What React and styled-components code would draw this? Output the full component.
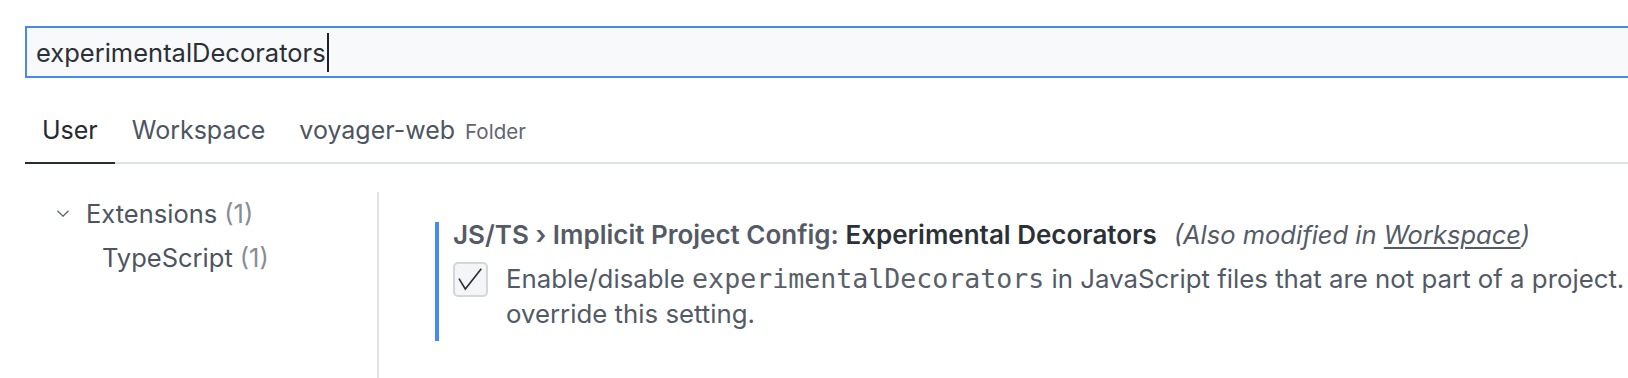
import React from "react";
import styled, { createGlobalStyle } from "styled-components";

const Global = createGlobalStyle`
  html, body {
    margin: 0;
    padding: 0;
    background: #ffffff;
    overflow: hidden;
  }
  body {
    font-family: Inter, "Noto Sans", "Liberation Sans", sans-serif;
    -webkit-font-smoothing: antialiased;
  }
`;

const Page = styled.div`
  width: 2310px;
  padding: 26px 0 0 25px;
  height: 352px;
  display: flex;
  flex-direction: column;
`;

const SearchBox = styled.div`
  box-sizing: border-box;
  height: 52px;
  border: 2px solid #4689f1;
  background: #f8f9fb;
  display: flex;
  align-items: center;
  padding-left: 9px;
`;

const SearchText = styled.span`
  font-size: 25.5px;
  color: #2b2f36;
`;

const Caret = styled.span`
  display: inline-block;
  width: 2px;
  height: 39px;
  background: #1f2124;
  margin-left: 1px;
`;

const TabBar = styled.div`
  margin-top: 32px;
  display: flex;
  box-shadow: inset 0 -2px 0 #dfe3e8;
`;

const Tab = styled.div`
  padding: 0 17px 12px;
  font-size: 25px;
  line-height: 40px;
  height: 40px;
  white-space: nowrap;
  color: ${(p) => (p.$active ? "#262a31" : "#4d5560")};
  border-bottom: 2px solid ${(p) => (p.$active ? "#2a2d33" : "transparent")};
`;

const TabHint = styled.span`
  font-size: 20.5px;
  line-height: 1;
  margin-left: 10px;
  color: #5f6670;
`;

const Body = styled.div`
  flex: 1;
  display: flex;
  padding-top: 28px;
`;

const TreePane = styled.div`
  width: 352px;
  display: flex;
  flex-direction: column;
`;

const TreeRow = styled.div`
  display: flex;
  align-items: center;
  height: 43.5px;
  padding-left: ${(p) => (p.$level ? 77 : 32)}px;
  font-size: 25.5px;
  color: #4d5560;
`;

const Chevron = styled.svg`
  width: 12px;
  height: 7px;
  margin-right: 17px;
  flex: none;
`;

const Count = styled.span`
  color: #878d96;
  margin-left: 7px;
`;

const SettingsPane = styled.div`
  flex: 1;
  border-left: 2px solid #e1e3e7;
  padding: 30px 27px 0 56px;
`;

const SettingItem = styled.div`
  border-left: 4px solid #4689f1;
  padding: 0 0 10px 14px;
`;

const Title = styled.div`
  font-size: 26px;
  line-height: 25px;
  font-weight: 600;
  color: #545b66;
  white-space: nowrap;
`;

const TitleStrong = styled.span`
  color: #2c3138;
`;

const Modified = styled.span`
  font-weight: 400;
  font-style: italic;
  font-size: 25.5px;
  margin-left: 17px;
  color: #545b66;
`;

const ModLink = styled.span`
  text-decoration: underline;
  text-underline-offset: 3px;
`;

const ValueRow = styled.div`
  display: flex;
  align-items: flex-start;
  margin-top: 14px;
`;

const Checkbox = styled.div`
  box-sizing: border-box;
  flex: none;
  width: 35px;
  height: 35px;
  margin-top: 1px;
  border: 2px solid #d3d7dc;
  border-radius: 5px;
  background: #f4f5f7;
  display: flex;
  align-items: center;
  justify-content: center;
`;

const Description = styled.div`
  margin-left: 18px;
  font-size: 25.8px;
  line-height: 35px;
  color: #525a65;
`;

const Code = styled.code`
  font-family: "DejaVu Sans Mono", "Liberation Mono", monospace;
  font-size: 26.6px;
  line-height: 1;
  color: #59606a;
`;

export default function App() {
  return (
    <>
      <Global />
      <Page>
        <SearchBox>
          <SearchText>experimentalDecorators</SearchText>
          <Caret />
        </SearchBox>
        <TabBar>
          <Tab $active>User</Tab>
          <Tab>Workspace</Tab>
          <Tab>
            voyager-web<TabHint>Folder</TabHint>
          </Tab>
        </TabBar>
        <Body>
          <TreePane>
            <TreeRow>
              <Chevron viewBox="0 0 12 7">
                <path d="M0.5 0.8 L6 6.2 L11.5 0.8" fill="none" stroke="#5f6670" strokeWidth="1.3" />
              </Chevron>
              Extensions<Count>(1)</Count>
            </TreeRow>
            <TreeRow $level={1}>
              TypeScript<Count>(1)</Count>
            </TreeRow>
          </TreePane>
          <SettingsPane>
            <SettingItem>
              <Title>
                JS/TS › Implicit Project Config: <TitleStrong>Experimental Decorators</TitleStrong>
                <Modified>
                  (Also modified in <ModLink>Workspace</ModLink>)
                </Modified>
              </Title>
              <ValueRow>
                <Checkbox>
                  <svg width="31" height="31" viewBox="0 0 31 31">
                    <path d="M4 14.7 L10.3 25 L26.3 4.7" fill="none" stroke="#2b2f35" strokeWidth="1.6" />
                  </svg>
                </Checkbox>
                <Description>
                  Enable/disable <Code>experimentalDecorators</Code> in JavaScript files that are not part of a project. Existing <Code>jsconfig.json</Code> or <Code>tsconfig.json</Code> files override this setting.
                </Description>
              </ValueRow>
            </SettingItem>
          </SettingsPane>
        </Body>
      </Page>
    </>
  );
}
